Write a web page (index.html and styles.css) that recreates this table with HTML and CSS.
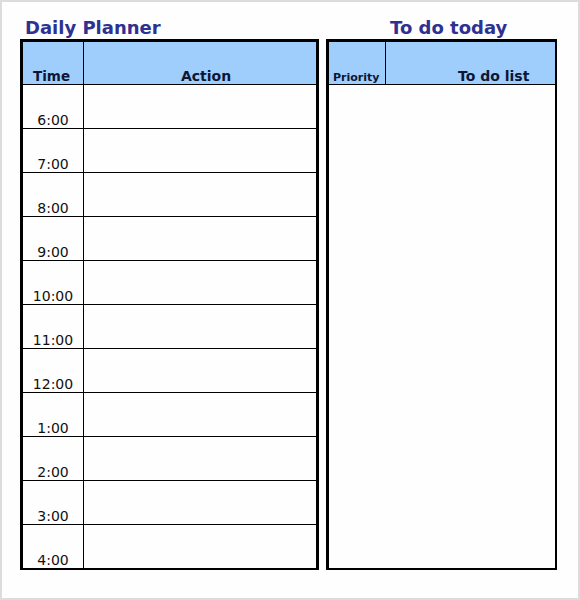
FILE: index.html
```html
<!DOCTYPE html>
<html>
<head>
<meta charset="utf-8">
<link rel="stylesheet" href="styles.css">
</head>
<body>
<div class="page">
  <div class="col left">
    <div class="title title-left">Daily Planner</div>
    <div class="box planner">
      <div class="head">
        <div class="cell time-h">Time</div>
        <div class="cell action-h">Action</div>
      </div>
      <div class="row"><div class="cell time">6:00</div><div class="cell action"></div></div>
      <div class="row"><div class="cell time">7:00</div><div class="cell action"></div></div>
      <div class="row"><div class="cell time">8:00</div><div class="cell action"></div></div>
      <div class="row"><div class="cell time">9:00</div><div class="cell action"></div></div>
      <div class="row"><div class="cell time">10:00</div><div class="cell action"></div></div>
      <div class="row"><div class="cell time">11:00</div><div class="cell action"></div></div>
      <div class="row"><div class="cell time">12:00</div><div class="cell action"></div></div>
      <div class="row"><div class="cell time">1:00</div><div class="cell action"></div></div>
      <div class="row"><div class="cell time">2:00</div><div class="cell action"></div></div>
      <div class="row"><div class="cell time">3:00</div><div class="cell action"></div></div>
      <div class="row last"><div class="cell time">4:00</div><div class="cell action"></div></div>
    </div>
  </div>
  <div class="col right">
    <div class="title title-right">To do today</div>
    <div class="box todo">
      <div class="head">
        <div class="cell prio-h">Priority</div>
        <div class="cell list-h">To do list</div>
      </div>
      <div class="todo-body"></div>
    </div>
  </div>
</div>
</body>
</html>
```
FILE: styles.css
```css
html, body {
  margin: 0;
  padding: 0;
  background: #ffffff;
}
.page {
  width: 580px;
  height: 600px;
  box-sizing: border-box;
  border: 2px solid #dcdcdc;
  background: #fefefe;
  display: flex;
  gap: 7px;
  padding: 0 0 0 18px;
  font-family: "DejaVu Sans", Verdana, sans-serif;
}
.col {
  display: flex;
  flex-direction: column;
}
.left { width: 299px; }
.right { width: 231px; }
.title {
  height: 37px;
  box-sizing: border-box;
  font-weight: bold;
  font-size: 18px;
  color: #2e3192;
  line-height: 20px;
  padding-top: 16px;
  white-space: nowrap;
}
.title-left { padding-left: 5px; }
.title-right { padding-left: 64px; }
.box {
  border: 3px solid #000;
  border-bottom-width: 2px;
  display: flex;
  flex-direction: column;
}
.todo { border-right-width: 2px; flex: none; height: 526px; }
.head {
  display: flex;
  height: 42px;
  border-bottom: 1px solid #000;
  background: #9fcdfc;
  color: #0d1633;
  font-weight: bold;
}
.cell {
  display: flex;
  align-items: flex-end;
  box-sizing: border-box;
}
.time-h {
  width: 61px;
  border-right: 1px solid #000;
  padding-left: 10px;
  font-size: 13.5px;
}
.action-h {
  flex: 1;
  justify-content: center;
  padding-left: 12px;
  font-size: 14px;
}
.prio-h {
  width: 57px;
  border-right: 1px solid #000;
  padding-left: 4px;
  font-size: 11px;
}
.list-h {
  flex: 1;
  padding-left: 72px;
  font-size: 14px;
}
.row {
  display: flex;
  height: 44px;
  border-bottom: 1px solid #000;
  box-sizing: border-box;
}
.row.last {
  height: 43px;
  border-bottom: none;
}
.time {
  width: 61px;
  border-right: 1px solid #000;
  justify-content: center;
  font-size: 14px;
  color: #111;
  line-height: 15px;
}
.action { flex: 1; }
.todo-body { flex: 1; background: #fefefe; }
```
